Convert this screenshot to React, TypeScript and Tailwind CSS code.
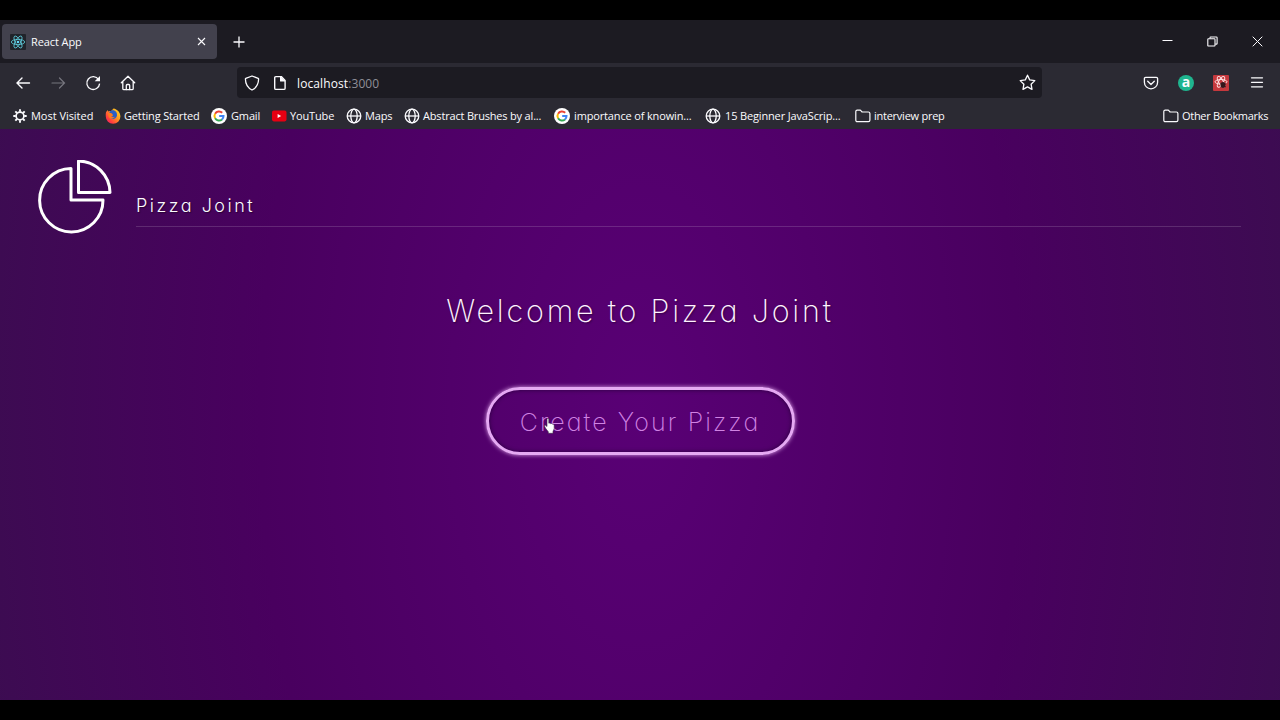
import type { ReactNode } from "react";

function GlobeIcon() {
  return (
    <svg width="16" height="16" viewBox="0 0 16 16" fill="none" stroke="#fbfbfe" strokeWidth="1.3" className="shrink-0">
      <circle cx="8" cy="8" r="6.8" />
      <ellipse cx="8" cy="8" rx="3.2" ry="6.8" />
      <path d="M1.2 8h13.6" />
    </svg>
  );
}

function FolderIcon() {
  return (
    <svg width="16" height="16" viewBox="0 0 16 16" fill="none" stroke="#fbfbfe" strokeWidth="1.2" strokeLinejoin="round" className="shrink-0">
      <path d="M.8 12.2V3.6Q.8 2.2 2.2 2.2H5q.7 0 1.1.6l1 1.2h6.3q1.5 0 1.5 1.5v6.7q0 1.4-1.5 1.4H2.3Q.8 13.6.8 12.2Z" />
    </svg>
  );
}

function GoogleIcon() {
  return (
    <svg width="16" height="16" viewBox="0 0 16 16" fill="none" strokeWidth="2" className="shrink-0">
      <circle cx="8" cy="8" r="8" fill="#fff" />
      <path d="M11.2 4.8A4.5 4.5 0 0 0 4.1 5.7" stroke="#ea4335" />
      <path d="M4.1 5.7a4.5 4.5 0 0 0 0 4.6" stroke="#fbbc05" />
      <path d="M4.1 10.3a4.5 4.5 0 0 0 6.9 1.1" stroke="#34a853" />
      <path d="M11 11.4A4.5 4.5 0 0 0 12.5 8H8.2" stroke="#4285f4" />
    </svg>
  );
}

function GearIcon() {
  return (
    <svg width="14" height="14" viewBox="0 0 14 14" fill="none" stroke="#fbfbfe" className="ml-px shrink-0">
      <circle cx="7" cy="7" r="3.9" strokeWidth="1.7" />
      <path strokeWidth="1.9" d="M7 .3v2.5M7 11.2v2.5M.3 7h2.5M11.2 7h2.5M2.3 2.3 4 4M10 10l1.7 1.7M2.3 11.7 4 10M10 4l1.7-1.7" />
    </svg>
  );
}

function FirefoxIcon() {
  return (
    <svg width="16" height="16" viewBox="0 0 16 16" className="shrink-0">
      <defs>
        <linearGradient id="flame" x1="1" y1="0" x2="0" y2="1">
          <stop offset="0" stopColor="#ffe226" />
          <stop offset=".4" stopColor="#ff9a1e" />
          <stop offset=".75" stopColor="#ff3b3f" />
          <stop offset="1" stopColor="#e3177f" />
        </linearGradient>
      </defs>
      <path d="M1 4.2 2.6 2l.6 1.6C4.400 3 5.500 3 6 3.200L8.500.4C12 1 15.400 4 15.400 8.500A7.300 7.300 0 0 1 .8 8.500C.7 7 .6 5.500 1 4.200Z" fill="url(#flame)" />
      <path d="M4.500 3.800C6 1.800 9.500 1.500 11.200 4c1.500 2.300 1 5.300-1.200 6.500-2 1-4.300.3-5-1.400L8 8 6.800 6 4.500 5.800Z" fill="#2b5fc4" />
      <path d="M3 5.500c2-.8 3.600-.3 4.800.9L6 8c.7 1.200 2.200 1.500 3.800.8-1 2.200-4.600 2.500-6 .2Z" fill="#ff7a1c" />
    </svg>
  );
}

function YouTubeIcon() {
  return (
    <svg width="16" height="16" viewBox="0 0 16 16" className="shrink-0">
      <rect x="1" y="2.600" width="14.500" height="10.800" rx="1.800" fill="#e60012" />
      <path d="M6.600 5.900v4.200L10.200 8Z" fill="#fff" />
    </svg>
  );
}

function Bookmark({ icon, label, width, text }: { icon: ReactNode; label: string; width: string; text: string }) {
  return (
    <div className={`flex h-4 shrink-0 items-center ${width}`}>
      <span className="flex w-[19px] shrink-0 items-center">{icon}</span>
      <span className={`whitespace-nowrap leading-4 ${text}`}>{label}</span>
    </div>
  );
}

function TabStrip() {
  return (
    <div className="flex h-[43px] shrink-0 items-center bg-[#1c1b22]">
      <div className="ml-0.5 flex h-[35px] w-[215px] items-center rounded bg-[#42414d]">
        <svg width="16" height="16" viewBox="0 0 16 16" fill="none" stroke="#5fd0e0" strokeWidth=".8" className="ml-2 shrink-0">
          <rect width="16" height="16" rx="1" fill="#20232a" stroke="none" />
          <ellipse cx="8" cy="8" rx="6.700" ry="2.600" />
          <ellipse cx="8" cy="8" rx="6.700" ry="2.600" transform="rotate(60 8 8)" />
          <ellipse cx="8" cy="8" rx="6.700" ry="2.600" transform="rotate(120 8 8)" />
          <circle cx="8" cy="8" r="1.300" fill="#61dafb" stroke="none" />
        </svg>
        <span className="ml-[5px] grow pt-0.5 text-[11px] tracking-[-0.1px]">React App</span>
        <svg width="9" height="9" viewBox="0 0 9 9" stroke="#fbfbfe" strokeWidth="1.100" className="mr-[11px]">
          <path d="m1 1 7 7M8 1 1 8" />
        </svg>
      </div>
      <svg width="12" height="12" viewBox="0 0 12 12" stroke="#fbfbfe" strokeWidth="1.300" className="ml-[15.500px]">
        <path d="M6 .5v11M.5 6h11" />
      </svg>
      <div className="ml-auto flex items-center gap-[34px] pr-[17px]">
        <svg width="11" height="11" viewBox="0 0 11 11" stroke="#fbfbfe">
          <path d="M.5 4.500h10" />
        </svg>
        <svg width="11" height="11" viewBox="0 0 11 11" fill="none" stroke="#fbfbfe" strokeWidth="1.100">
          <rect x=".8" y="2.800" width="7.200" height="7.200" rx=".6" />
          <path d="M3 2.600V1.700Q3 1 3.700 1h5.600q.8 0 .8.800v5.600q0 .7-.8.700H8.300" />
        </svg>
        <svg width="11" height="11" viewBox="0 0 11 11" stroke="#fbfbfe" strokeWidth="1">
          <path d="m.7.7 9.600 9.600M10.300.7.7 10.300" />
        </svg>
      </div>
    </div>
  );
}

function NavBar() {
  return (
    <div className="flex h-10 shrink-0 items-center">
      <div className="flex w-[237px] shrink-0 items-center gap-[19px] pl-[15px]">
        <svg width="16" height="16" viewBox="0 0 16 16" fill="none" stroke="#fbfbfe" strokeWidth="1.400" strokeLinecap="round">
          <path d="M14.500 8H2M7 3 2 8l5 5" />
        </svg>
        <svg width="16" height="16" viewBox="0 0 16 16" fill="none" stroke="#77767f" strokeWidth="1.200" strokeLinecap="round">
          <path d="M2 8h12.500M9.500 3l5 5-5 5" />
        </svg>
        <svg width="16" height="16" viewBox="0 0 16 16" fill="none" stroke="#fbfbfe" strokeWidth="1.300">
          <path d="M13.600 4.600A6.400 6.400 0 1 0 14.600 8.600" />
          <path d="M15 1v5.300H9.700Z" fill="#fbfbfe" stroke="none" />
        </svg>
        <svg width="16" height="16" viewBox="0 0 16 16" fill="none" stroke="#fbfbfe" strokeWidth="1.300" strokeLinejoin="round" strokeLinecap="round">
          <path d="M1.300 7.800 8 1.300l6.700 6.500M2.800 6.700v6.800q0 1.200 1.200 1.200h8q1.200 0 1.200-1.200V6.700" />
          <path d="M6.300 14.500v-4q0-1 1-1h1.400q1 0 1 1v4" />
        </svg>
      </div>
      <div className="mb-px flex h-[31px] w-[805px] shrink-0 items-center rounded bg-[#1c1b22] pl-[7px] pr-1.5">
        <svg width="16" height="16" viewBox="0 0 16 16" fill="none" stroke="#fbfbfe" strokeWidth="1.300" strokeLinejoin="round">
          <path d="M8 1 14.200 3.400q.4.200.4.700C14.500 9 12.300 13 8 15 3.700 13 1.500 9 1.400 4.100q0-.5.400-.7Z" />
        </svg>
        <svg width="14" height="16" viewBox="0 0 14 16" fill="none" stroke="#fbfbfe" strokeWidth="1.400" strokeLinejoin="round" className="ml-[13px]">
          <path d="M2.900 1.600h5.400l3.800 3.800v7.800q0 1.200-1.200 1.200h-8q-1.200 0-1.200-1.200V2.800q0-1.200 1.200-1.200Z" />
          <path d="M7.700 1.600v4.300h4.400" fill="#fbfbfe" />
        </svg>
        <span className="ml-[10px] pt-0.5 text-[12px] leading-4 tracking-[0.1px]">
          localhost<span className="text-[#8f8f98]">:3000</span>
        </span>
        <svg width="17" height="17" viewBox="0 0 17 17" fill="none" stroke="#fbfbfe" strokeWidth="1.300" strokeLinejoin="round" className="ml-auto">
          <path d="m8.500 1.200 2.200 4.700 5.100.7-3.700 3.600.9 5.200-4.500-2.500L4 15.400l.9-5.200L1.200 6.600l5.100-.7Z" />
        </svg>
      </div>
      <div className="ml-auto flex items-center gap-[19px] pr-4">
        <svg width="16" height="16" viewBox="0 0 16 16" fill="none" stroke="#fbfbfe" strokeWidth="1.300" strokeLinecap="round" strokeLinejoin="round">
          <path d="M2.700 2.300h10.600q1.300 0 1.300 1.300v3.600a6.600 6.600 0 0 1-13.200 0V3.600q0-1.300 1.300-1.300Z" />
          <path d="m4.700 6.300 3.300 3.200 3.300-3.200" />
        </svg>
        <span className="flex h-4 w-4 items-center justify-center rounded-full bg-[#1fb58f] pb-0.5 text-[14px] font-bold leading-none">a</span>
        <svg width="16" height="16" viewBox="0 0 16 16" fill="none" stroke="#ffdede" strokeWidth="1">
          <rect width="16" height="16" rx="1" fill="#c5383d" stroke="none" />
          <ellipse cx="8" cy="6.800" rx="6" ry="2.300" />
          <ellipse cx="8" cy="6.800" rx="6" ry="2.300" transform="rotate(60 8 6.800)" />
          <ellipse cx="8" cy="6.800" rx="6" ry="2.300" transform="rotate(120 8 6.800)" />
          <ellipse cx="10" cy="10" rx="2.500" ry="3" fill="#35151b" stroke="none" />
          <path d="m7 8.500 6 3.500M13 8.500 7.500 12" stroke="#35151b" strokeWidth=".8" />
        </svg>
        <svg width="14" height="16" viewBox="0 0 14 16" stroke="#fbfbfe" strokeWidth="1.300" strokeLinecap="round" className="ml-[2px]">
          <path d="M1.500 2.800h11M1.500 7.300h11M1.500 11.800h11" />
        </svg>
      </div>
    </div>
  );
}

function BookmarksBar() {
  return (
    <div className="flex h-[26px] shrink-0 items-center pl-3 text-[11px] tracking-[-0.15px]">
      <Bookmark icon={<GearIcon />} label="Most Visited" width="w-[93px]" text="tracking-[-0.03px]" />
      <Bookmark icon={<FirefoxIcon />} label="Getting Started" width="w-[106px]" text="" />
      <Bookmark icon={<GoogleIcon />} label="Gmail" width="w-[60px]" text="pl-px" />
      <Bookmark icon={<YouTubeIcon />} label="YouTube" width="w-[75px]" text="" />
      <Bookmark icon={<GlobeIcon />} label="Maps" width="w-[58px]" text="" />
      <Bookmark icon={<GlobeIcon />} label="Abstract Brushes by al..." width="w-[150px]" text="tracking-[-0.18px]" />
      <Bookmark icon={<GoogleIcon />} label="importance of knowin..." width="w-[151px]" text="pl-px" />
      <Bookmark icon={<GlobeIcon />} label="15 Beginner JavaScrip..." width="w-[150px]" text="pl-px" />
      <Bookmark icon={<FolderIcon />} label="interview prep" width="w-[100px]" text="tracking-[-0.25px]" />
      <div className="ml-auto flex">
        <Bookmark icon={<FolderIcon />} label="Other Bookmarks" width="w-[117px]" text="tracking-[-0.3px]" />
      </div>
    </div>
  );
}

export default function App() {
  return (
    <div className="flex h-[720px] w-[1280px] flex-col overflow-hidden bg-black py-5 font-['Open_Sans','Noto_Sans',sans-serif] text-[#fbfbfe]">
      <TabStrip />
      <div className="flex shrink-0 flex-col bg-[#2b2a33]">
        <NavBar />
        <BookmarksBar />
      </div>
      <main className="flex min-h-0 grow flex-col bg-[radial-gradient(ellipse_690px_1300px_at_center,#590075_0%,#49005f_55%,#3b0d50_100%)] font-['Inter',sans-serif] font-extralight [font-feature-settings:'cv11']">
        <header className="flex h-[110px] shrink-0 items-end pl-[37px] pr-[39px]">
          <svg width="76" height="76" viewBox="0 0 76 76" fill="none" stroke="#fff" strokeWidth="3" strokeLinejoin="round" className="mb-[3px] shrink-0">
            <path d="M34 8.500A31.700 31.700 0 1 0 66 40H34Z" />
            <path d="M41.500 1A32 32 0 0 1 73 32.500H41.500Z" />
          </svg>
          <div className="mb-[12px] ml-[23px] h-[34px] grow border-b border-white/15">
            <h1 className="whitespace-nowrap pt-px text-[18px] font-light leading-6 tracking-[2.500px] [text-shadow:1px_1px_1px_#0006]">Pizza Joint</h1>
          </div>
        </header>
        <section className="flex flex-col items-center">
          <h2 className="mt-[52px] whitespace-nowrap text-[30.500px] leading-10 tracking-[2.800px] text-[#fff2ff] [text-shadow:1px_1px_2px_#0006]">Welcome to Pizza Joint</h2>
          <button className="relative mt-[56px] flex h-[68px] w-[309px] items-center justify-center rounded-full border-[3px] border-[#e5a9f3] text-[25px] tracking-[2.100px] text-[#d083e3] shadow-[0_0_4px_#dba4e6,inset_0_0_4px_#29003c]">
            <span className="whitespace-nowrap pt-[3px]">Create Your Pizza</span>
            <svg width="12" height="16" viewBox="0 0 12 16" fill="#fff" stroke="#3b2845" strokeWidth=".6" className="absolute left-[55px] top-[28px]">
              <path d="M3 1.200q0-.9.900-.9t.9.900v4l.8-.1 1 .5.900-.1.800.6h.7q1.200.2 1.200 1.400v3.200L9 13.300v2H4.300v-1.500L1.400 10 .4 7.800q.1-.9 1-.6L3 8.500Z" />
            </svg>
          </button>
        </section>
      </main>
    </div>
  );
}
